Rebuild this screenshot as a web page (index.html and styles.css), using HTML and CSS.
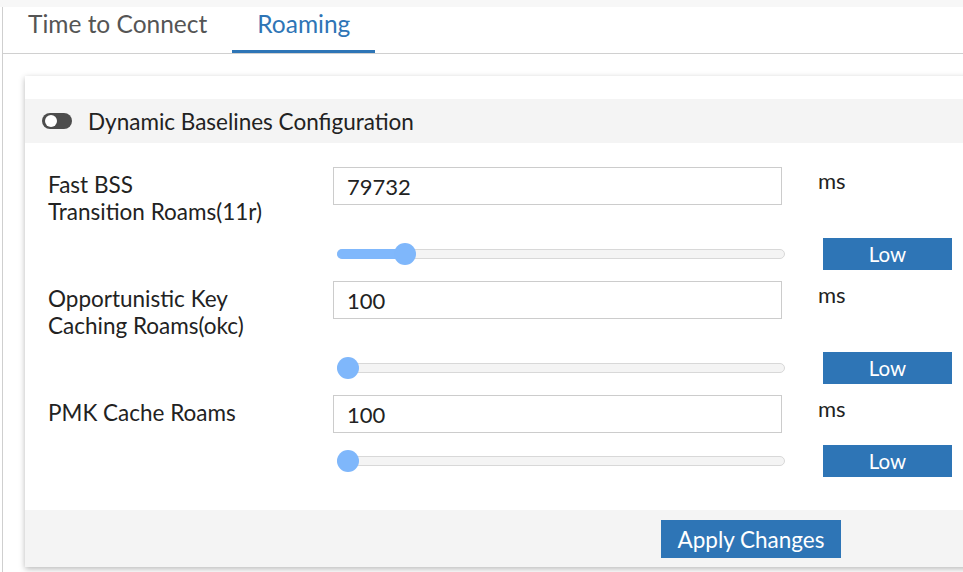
FILE: index.html
```html
<!DOCTYPE html>
<html>
<head>
<meta charset="utf-8">
<link rel="stylesheet" href="styles.css">
</head>
<body>
<div class="topstrip"></div>
<div class="panel">
  <nav class="tabs">
    <a class="tab">Time to Connect</a>
    <a class="tab active">Roaming</a>
  </nav>
  <div class="content">
    <section class="card">
      <div class="card-top"></div>
      <header class="card-header">
        <svg class="toggle" width="30" height="16" viewBox="0 0 30 16"><rect x="0" y="0" width="30" height="16" rx="8" fill="#4d4d4d"/><circle cx="9" cy="8" r="6" fill="#fff"/></svg>
        <span class="card-title">Dynamic Baselines Configuration</span>
      </header>
      <div class="card-body">
        <div class="field">
          <label class="field-label">Fast BSS<br>Transition Roams(11r)</label>
          <input class="field-input" type="text" value="79732">
          <span class="unit">ms</span>
          <div class="slider"><div class="slider-fill" style="width:68px"></div><div class="slider-thumb" style="left:57px"></div></div>
          <button class="level">Low</button>
        </div>
        <div class="field">
          <label class="field-label">Opportunistic Key<br>Caching Roams(okc)</label>
          <input class="field-input" type="text" value="100">
          <span class="unit">ms</span>
          <div class="slider"><div class="slider-fill" style="width:0px"></div><div class="slider-thumb" style="left:0px"></div></div>
          <button class="level">Low</button>
        </div>
        <div class="field">
          <label class="field-label">PMK Cache Roams</label>
          <input class="field-input" type="text" value="100">
          <span class="unit">ms</span>
          <div class="slider"><div class="slider-fill" style="width:0px"></div><div class="slider-thumb" style="left:0px"></div></div>
          <button class="level">Low</button>
        </div>
      </div>
      <footer class="card-footer">
        <button class="apply">Apply Changes</button>
      </footer>
    </section>
  </div>
</div>
</body>
</html>
```

FILE: styles.css
```css
html, body {
  margin: 0;
  padding: 0;
  overflow: hidden;
  background: #fff;
  font-family: Lato, "Open Sans", sans-serif;
  color: #222;
}
.topstrip {
  height: 7px;
  background: #f7f7f7;
}
.panel {
  margin-left: 2px;
  border-left: 1px solid #cfcfcf;
  height: 565px;
}
.tabs {
  display: flex;
  border-bottom: 1px solid #d0d0d0;
  height: 46px;
}
.tab {
  display: block;
  padding: 0 25px 0 25px;
  height: 43px;
  line-height: 34px;
  font-size: 24.5px;
  color: #555;
  border-bottom: 3px solid transparent;
}
.tab.active {
  color: #2e75b6;
  border-bottom-color: #2e75b6;
  padding-left: 25px;
}
.content {
  padding: 22px 0 0 22px;
}
.card {
  width: 1452px;
  background: #fff;
  box-shadow: 0 2px 6px rgba(0, 0, 0, 0.28);
}
.card-top {
  height: 23px;
}
.card-header {
  height: 44px;
  background: #f4f4f4;
  display: flex;
  align-items: center;
  padding-left: 17px;
}
.toggle {
  display: block;
  margin-right: 16px;
}
.card-title {
  font-size: 22.5px;
  color: #222;
}
.card-body {
  padding: 24px 0 33px 23px;
  display: flex;
  flex-direction: column;
  gap: 11px;
}
.field {
  display: grid;
  grid-template-columns: 285px 449px 170px;
  row-gap: 12px;
  align-items: start;
}
.field-label {
  grid-column: 1;
  grid-row: 1;
  font-size: 22.5px;
  line-height: 27px;
  padding: 4px 0 1px;
  color: #222;
}
.field-input {
  grid-column: 2;
  grid-row: 1;
  box-sizing: border-box;
  width: 449px;
  height: 38px;
  border: 1px solid #cccccc;
  padding: 0 0 0 13px;
  margin: 0;
  font-family: Lato, sans-serif;
  font-size: 22px;
  color: #222;
  outline: none;
}
.unit {
  grid-column: 3;
  grid-row: 1;
  font-size: 22px;
  line-height: 27px;
  padding: 0 0 0 36px;
  color: #222;
}
.slider {
  grid-column: 2;
  grid-row: 2;
  align-self: center;
  position: relative;
  margin-left: 4px;
  width: 448px;
  height: 10px;
  box-sizing: border-box;
  border: 1px solid #d8d8d8;
  border-radius: 6px;
  background: #f4f4f4;
}
.slider-fill {
  position: absolute;
  left: -1px;
  top: -1px;
  height: 10px;
  border-radius: 6px;
  background: #80b8fc;
}
.slider-thumb {
  position: absolute;
  top: -7px;
  width: 22px;
  height: 22px;
  margin-left: -1px;
  border-radius: 50%;
  background: #7fb7fb;
}
.level {
  grid-column: 3;
  grid-row: 2;
  margin: 0 0 0 41px;
  width: 129px;
  height: 32px;
  border: none;
  background: #2e75b6;
  color: #fff;
  font-family: Lato, sans-serif;
  font-size: 20.5px;
  padding: 0;
}
.card-footer {
  height: 57px;
  background: #f4f4f4;
  display: flex;
  justify-content: center;
  align-items: flex-start;
  padding-top: 10px;
  box-sizing: border-box;
}
.apply {
  width: 180px;
  height: 38px;
  padding: 0;
  border: none;
  background: #2e75b6;
  color: #fff;
  font-family: Lato, sans-serif;
  font-size: 22.5px;
}
```
